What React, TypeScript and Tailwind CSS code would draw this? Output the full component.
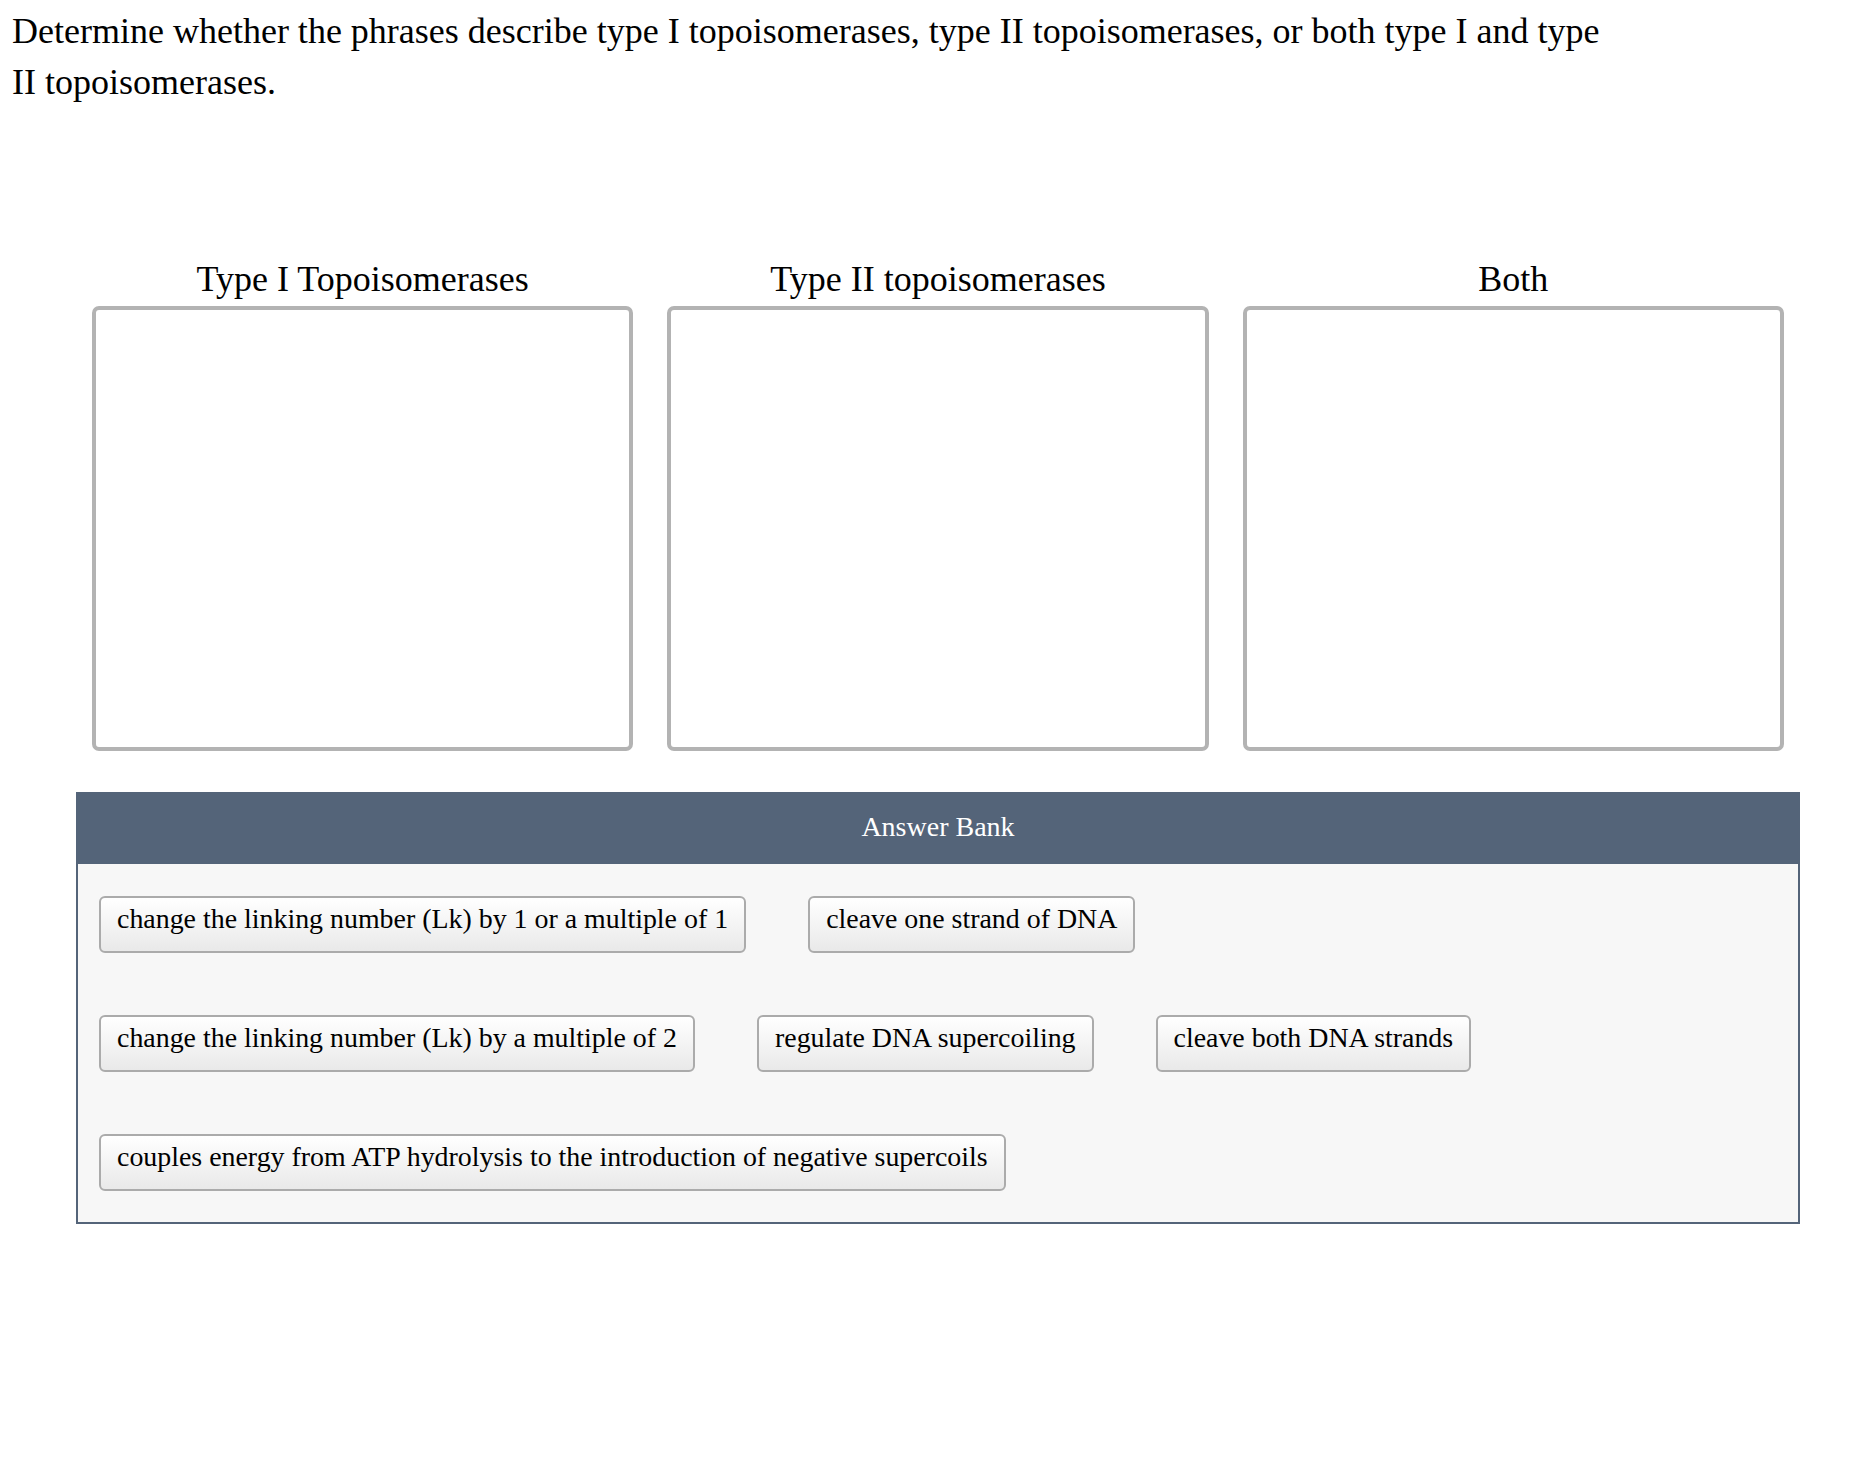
const columns = ["Type I Topoisomerases", "Type II topoisomerases", "Both"];

const bankRows: string[][] = [
  ["change the linking number (Lk) by 1 or a multiple of 1", "cleave one strand of DNA"],
  [
    "change the linking number (Lk) by a multiple of 2",
    "regulate DNA supercoiling",
    "cleave both DNA strands",
  ],
  ["couples energy from ATP hydrolysis to the introduction of negative supercoils"],
];

function Chip({ label }: { label: string }) {
  return (
    <div className="flex h-[57px] items-center whitespace-nowrap rounded-[6px] border-2 border-[#ababab] bg-gradient-to-b from-[#ffffff] to-[#e9e9e9] px-[16px] pb-[12px] pt-[1px] text-[27.9px] leading-[32px] text-black">
      {label}
    </div>
  );
}

export default function App() {
  return (
    <div className="min-h-[1478px] w-[1870px] bg-white font-['Liberation_Serif','Times_New_Roman',serif] text-black">
      <p className="w-[1605px] pl-[12px] pt-[6px] text-[36px] leading-[51px]">
        Determine whether the phrases describe type I topoisomerases, type II topoisomerases, or
        both type I and type II topoisomerases.
      </p>

      <div className="ml-[92px] mt-[146px] grid w-[1692px] grid-cols-3 gap-x-[34px]">
        {columns.map((title) => (
          <div key={title} className="flex flex-col">
            <h2 className="mb-[2px] text-center text-[36px] leading-[50px]">{title}</h2>
            <div className="h-[445px] rounded-[7px] border-4 border-[#b3b3b3] bg-white" />
          </div>
        ))}
      </div>

      <div className="ml-[76px] mt-[41px] w-[1724px] border-[2px] border-[#546479] bg-[#f7f7f7]">
        <div className="flex h-[70px] items-center justify-center bg-[#546479] pb-[4px] text-[28px] text-white">
          Answer Bank
        </div>
        <div className="flex flex-col gap-y-[62px] pb-[31px] pl-[21px] pt-[32px]">
          {bankRows.map((row, i) => (
            <div key={i} className="flex gap-x-[62px]">
              {row.map((label) => (
                <Chip key={label} label={label} />
              ))}
            </div>
          ))}
        </div>
      </div>
    </div>
  );
}
